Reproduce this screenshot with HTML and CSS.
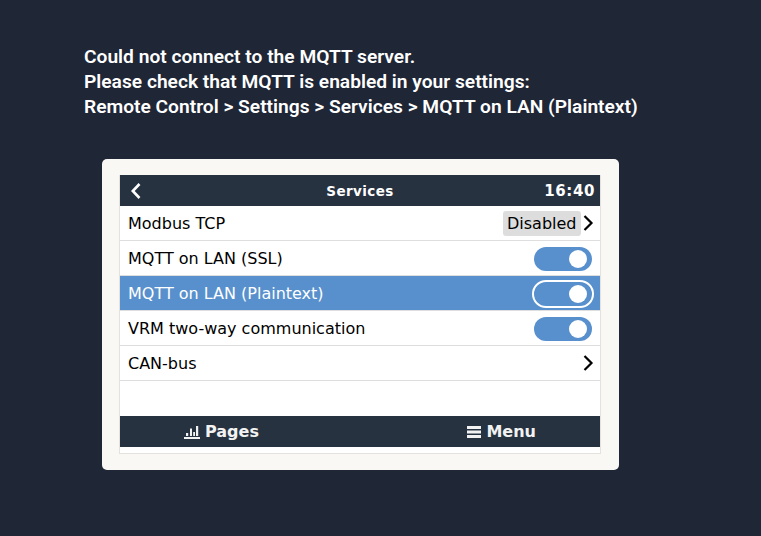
FILE: index.html
```html
<!DOCTYPE html>
<html lang="en">
<head>
<meta charset="utf-8">
<title>MQTT</title>
<link rel="stylesheet" href="styles.css">
</head>
<body>
<main class="page">
  <p class="message">Could not connect to the MQTT server.<br>Please check that MQTT is enabled in your settings:<br>Remote Control &gt; Settings &gt; Services &gt; MQTT on LAN (Plaintext)</p>
  <div class="card">
    <div class="screen">
      <header class="topbar">
        <svg class="back" width="12" height="16" viewBox="0 0 12 16"><path d="M9.500 1 2.800 8l6.700 7" fill="none" stroke="#fff" stroke-width="2.600"/></svg>
        <span class="title">Services</span>
        <span class="time">16:40</span>
      </header>
      <div class="list">
        <div class="row">
          <span>Modbus TCP</span>
          <span class="end"><span class="value">Disabled</span><svg class="chev" width="11" height="16" viewBox="0 0 11 16"><path d="M1.500 1 8.500 8 1.500 15" fill="none" stroke="#000" stroke-width="2.200"/></svg></span>
        </div>
        <div class="row">
          <span>MQTT on LAN (SSL)</span>
          <span class="switch"><span class="knob"></span></span>
        </div>
        <div class="row selected">
          <span>MQTT on LAN (Plaintext)</span>
          <span class="switch ring"><span class="knob"></span></span>
        </div>
        <div class="row">
          <span>VRM two-way communication</span>
          <span class="switch"><span class="knob"></span></span>
        </div>
        <div class="row">
          <span>CAN-bus</span>
          <span class="end"><svg class="chev" width="11" height="16" viewBox="0 0 11 16"><path d="M1.500 1 8.500 8 1.500 15" fill="none" stroke="#000" stroke-width="2.200"/></svg></span>
        </div>
      </div>
      <footer class="bottombar">
        <span class="tab">
          <svg class="icon-pages" width="16" height="13" viewBox="0 0 16 13"><path d="M0 11h16v2H0zM2 7h2.200v3H2zM6 2.500h2V10H6zM9.200 6h1.800v4H9.200zM12 0h2.200v10H12z" fill="#f2f2f2"/></svg>
          Pages
        </span>
        <span class="tab">
          <svg class="icon-menu" width="14" height="12" viewBox="0 0 14 12"><path d="M0 0h14v3H0zM0 4.500h14v3H0zM0 9h14v3H0z" fill="#f2f2f2"/></svg>
          Menu
        </span>
      </footer>
    </div>
  </div>
</main>
</body>
</html>
```
FILE: styles.css
```css
* { box-sizing: border-box; }
html, body { margin: 0; height: 100%; }
body { background: #1f2636; overflow: hidden; }
.page { padding: 44px 0 0 84px; }
.message {
  margin: 0;
  font: 600 19.200px/25px Roboto, sans-serif;
  color: #fff;
}
.card {
  margin: 40px 0 0 18px;
  width: 517px;
  height: 311px;
  padding: 16px 18px 16px 17px;
  background: #faf8f5;
  border-radius: 5px;
}
.screen {
  width: 482px;
  height: 279px;
  border: 1px solid #e4e2df;
  border-top: 0;
  background: #fff;
  font-family: "DejaVu Sans", sans-serif;
  display: flex;
  flex-direction: column;
}
.topbar {
  height: 31px;
  flex: none;
  background: #273241;
  color: #fff;
  font-weight: 700;
  display: flex;
  align-items: center;
  justify-content: space-between;
  padding: 0 5px 0 10px;
  position: relative;
}
.title {
  position: absolute;
  left: 0;
  right: 0;
  text-align: center;
  font-size: 13.500px;
  letter-spacing: .4px;
}
.time { font-size: 15px; letter-spacing: .6px; }
.list { height: 210px; flex: none; }
.row {
  height: 35px;
  padding: 0 8px;
  border-bottom: 1px solid #dedede;
  display: flex;
  align-items: center;
  justify-content: space-between;
  font-size: 16px;
  color: #000;
}
.selected { background: #5890cd; color: #fff; }
.end { display: flex; align-items: center; gap: 2px; margin-right: -2px; }
.value {
  background: #dddddd;
  border-radius: 3px;
  padding: 0 4.500px 0 4px;
  height: 25px;
  line-height: 25px;
}
.switch {
  width: 58px;
  height: 24px;
  border-radius: 12px;
  background: #5890cd;
  display: flex;
  align-items: center;
  justify-content: flex-end;
  padding-right: 5px;
  margin-top: 2px;
}
.ring {
  width: 62px;
  height: 28px;
  border-radius: 14px;
  border: 2px solid #fff;
  padding-right: 5px;
  margin-right: -2px;
}
.knob { width: 18px; height: 18px; border-radius: 50%; background: #fff; }
.bottombar {
  height: 31px;
  flex: none;
  background: #273241;
  color: #f2f2f2;
  font-weight: 700;
  font-size: 16px;
  display: flex;
  justify-content: space-between;
  padding: 0 64px;
}
.tab { display: flex; align-items: center; gap: 5px; }
.icon-pages { margin-top: 1px; }
```
